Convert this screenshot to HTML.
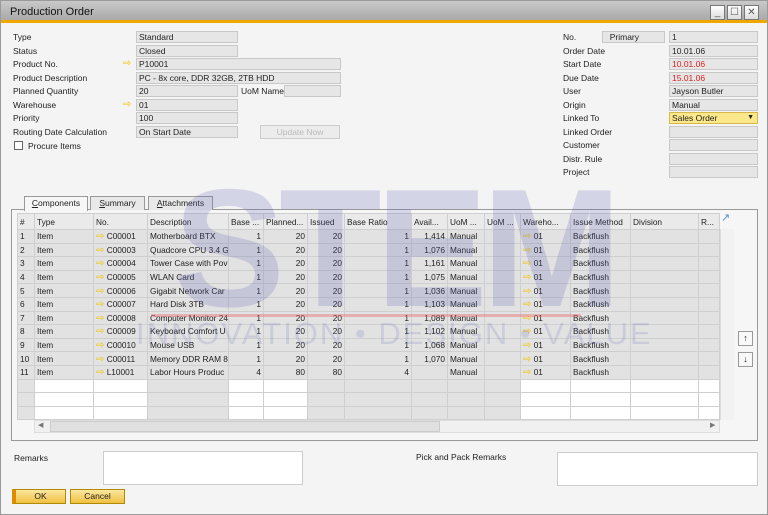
<!DOCTYPE html>
<html><head><meta charset="utf-8"><style>
*{box-sizing:border-box;margin:0;padding:0}
body{width:768px;height:515px;overflow:hidden;background:#fff;font-family:"Liberation Sans",sans-serif;font-size:8.5px;color:#222;position:relative}
.win{position:absolute;left:0;top:0;width:768px;height:515px;border:1px solid #9a9a9a;background:#f4f4f4}
.title{position:absolute;left:0;top:0;width:766px;height:22px;background:linear-gradient(#c9c9c9,#a9a9a9);border-bottom:3px solid #f0a800}
.title span{position:absolute;left:9px;top:5px;font-size:11px;color:#111}
.tb{position:absolute;top:4px;width:15px;height:15px;border:1px solid #777;background:linear-gradient(#fff,#ddd);font-size:10px;text-align:center;line-height:13px;color:#555}
.a{position:absolute;white-space:nowrap}
.f{position:absolute;height:12px;background:#e6e6e6;border:1px solid #c8c8c8;padding-left:2px;line-height:10px;white-space:nowrap;overflow:hidden}
.arr{color:#f2c200;font-size:10px;line-height:10px}
.tab{position:absolute;top:195px;height:14px;border:1px solid #999;border-bottom:none;background:#e9e9e9;text-align:center;line-height:12px}
.panel{position:absolute;left:10px;top:208px;width:747px;height:232px;border:1px solid #999;background:#f6f6f6}
table{position:absolute;left:16px;top:212px;border-collapse:collapse;table-layout:fixed;width:702px}
td,th{height:13.6px;line-height:12px;border:1px solid #cfcfcf;padding:0 2px;white-space:nowrap;overflow:hidden;font-weight:normal;text-align:left;font-size:8.3px}
th{height:16px;background:#eaeaea}
tr.r td{background:#e2e2e2}
tr.e td{background:#fff}
tr.e td.g{background:#e2e2e2}
.n{text-align:right}
.wm{position:absolute;left:172px;top:163px;font-size:168px;font-weight:bold;color:rgba(95,105,185,0.22);letter-spacing:-6px;line-height:1}
.wm2{position:absolute;left:135px;top:317px;font-size:31px;color:rgba(95,105,185,0.18);letter-spacing:2px;line-height:1;white-space:nowrap}
.btn{position:absolute;top:488px;height:15px;border:1px solid #b08a00;background:linear-gradient(#fbe7a0,#f0c040);text-align:center;line-height:13px}
</style></head><body><div class="win">
<div class="title"><span>Production Order</span>
<div class="tb" style="left:709px">_</div><div class="tb" style="left:726px">☐</div><div class="tb" style="left:743px">✕</div></div>

<div class="a" style="left:12px;top:31px">Type</div><div class="f" style="left:135px;top:30px;width:102px">Standard</div>
<div class="a" style="left:12px;top:45px">Status</div><div class="f" style="left:135px;top:44px;width:102px">Closed</div>
<div class="a" style="left:12px;top:58px">Product No.</div><span class="a arr" style="left:122px;top:58px">⇨</span><div class="f" style="left:135px;top:57px;width:205px">P10001</div>
<div class="a" style="left:12px;top:72px">Product Description</div><div class="f" style="left:135px;top:71px;width:205px">PC - 8x core, DDR 32GB, 2TB HDD</div>
<div class="a" style="left:12px;top:85px">Planned Quantity</div><div class="f" style="left:135px;top:84px;width:102px">20</div>
<div class="a" style="left:240px;top:85px">UoM Name</div><div class="f" style="left:283px;top:84px;width:57px"></div>
<div class="a" style="left:12px;top:99px">Warehouse</div><span class="a arr" style="left:122px;top:99px">⇨</span><div class="f" style="left:135px;top:98px;width:102px">01</div>
<div class="a" style="left:12px;top:112px">Priority</div><div class="f" style="left:135px;top:111px;width:102px">100</div>
<div class="a" style="left:12px;top:126px">Routing Date Calculation</div><div class="f" style="left:135px;top:125px;width:102px">On Start Date</div>
<div class="a" style="left:259px;top:124px;width:80px;height:14px;border:1px solid #ccc;background:#ececec;color:#bbb;text-align:center;line-height:12px">Update Now</div>
<div class="a" style="left:13px;top:140px;width:9px;height:9px;border:1px solid #666;background:#fff"></div><div class="a" style="left:27px;top:140px">Procure Items</div>

<div class="a" style="left:562px;top:31px">No.</div><div class="f" style="left:601px;top:30px;width:63px;padding-left:2px">&nbsp;&nbsp;Primary</div><div class="f" style="left:668px;top:30px;width:89px">1</div>
<div class="a" style="left:562px;top:45px">Order Date</div><div class="f" style="left:668px;top:44px;width:89px">10.01.06</div>
<div class="a" style="left:562px;top:58px">Start Date</div><div class="f" style="left:668px;top:57px;width:89px;color:#e02020">10.01.06</div>
<div class="a" style="left:562px;top:72px">Due Date</div><div class="f" style="left:668px;top:71px;width:89px;color:#e02020">15.01.06</div>
<div class="a" style="left:562px;top:85px">User</div><div class="f" style="left:668px;top:84px;width:89px">Jayson Butler</div>
<div class="a" style="left:562px;top:99px">Origin</div><div class="f" style="left:668px;top:98px;width:89px">Manual</div>
<div class="a" style="left:562px;top:112px">Linked To</div><div class="f" style="left:668px;top:111px;width:89px;background:#fbe88a;border-color:#d9b84a">Sales Order<span style="position:absolute;right:3px;top:0;font-size:7px">▼</span></div>
<div class="a" style="left:562px;top:126px">Linked Order</div><div class="f" style="left:668px;top:125px;width:89px"></div>
<div class="a" style="left:562px;top:139px">Customer</div><div class="f" style="left:668px;top:138px;width:89px"></div>
<div class="a" style="left:562px;top:153px">Distr. Rule</div><div class="f" style="left:668px;top:152px;width:89px"></div>
<div class="a" style="left:562px;top:166px">Project</div><div class="f" style="left:668px;top:165px;width:89px"></div>

<div class="panel"></div>
<div class="tab" style="left:23px;width:64px;background:#f6f6f6;height:15px"><u>C</u>omponents</div>
<div class="tab" style="left:89px;width:55px"><u>S</u>ummary</div>
<div class="tab" style="left:147px;width:65px"><u>A</u>ttachments</div>

<table>
<colgroup><col style="width:17px"><col style="width:59px"><col style="width:54px"><col style="width:81px"><col style="width:35px"><col style="width:44px"><col style="width:37px"><col style="width:67px"><col style="width:36px"><col style="width:37px"><col style="width:36px"><col style="width:50px"><col style="width:60px"><col style="width:68px"><col style="width:21px"></colgroup>
<tr><th>#</th><th>Type</th><th>No.</th><th>Description</th><th>Base ...</th><th>Planned...</th><th>Issued</th><th>Base Ratio</th><th>Avail...</th><th>UoM ...</th><th>UoM ...</th><th>Wareho...</th><th>Issue Method</th><th>Division</th><th>R...</th></tr>
<tr class="r"><td>1</td><td>Item</td><td><span class="arr">⇨</span> C00001</td><td>Motherboard BTX</td><td class="n">1</td><td class="n">20</td><td class="n">20</td><td class="n">1</td><td class="n">1,414</td><td>Manual</td><td></td><td><span class="arr">⇨</span> 01</td><td>Backflush</td><td></td><td></td></tr>
<tr class="r"><td>2</td><td>Item</td><td><span class="arr">⇨</span> C00003</td><td>Quadcore CPU 3.4 G</td><td class="n">1</td><td class="n">20</td><td class="n">20</td><td class="n">1</td><td class="n">1,076</td><td>Manual</td><td></td><td><span class="arr">⇨</span> 01</td><td>Backflush</td><td></td><td></td></tr>
<tr class="r"><td>3</td><td>Item</td><td><span class="arr">⇨</span> C00004</td><td>Tower Case with Pov</td><td class="n">1</td><td class="n">20</td><td class="n">20</td><td class="n">1</td><td class="n">1,161</td><td>Manual</td><td></td><td><span class="arr">⇨</span> 01</td><td>Backflush</td><td></td><td></td></tr>
<tr class="r"><td>4</td><td>Item</td><td><span class="arr">⇨</span> C00005</td><td>WLAN Card</td><td class="n">1</td><td class="n">20</td><td class="n">20</td><td class="n">1</td><td class="n">1,075</td><td>Manual</td><td></td><td><span class="arr">⇨</span> 01</td><td>Backflush</td><td></td><td></td></tr>
<tr class="r"><td>5</td><td>Item</td><td><span class="arr">⇨</span> C00006</td><td>Gigabit Network Car</td><td class="n">1</td><td class="n">20</td><td class="n">20</td><td class="n">1</td><td class="n">1,036</td><td>Manual</td><td></td><td><span class="arr">⇨</span> 01</td><td>Backflush</td><td></td><td></td></tr>
<tr class="r"><td>6</td><td>Item</td><td><span class="arr">⇨</span> C00007</td><td>Hard Disk 3TB</td><td class="n">1</td><td class="n">20</td><td class="n">20</td><td class="n">1</td><td class="n">1,103</td><td>Manual</td><td></td><td><span class="arr">⇨</span> 01</td><td>Backflush</td><td></td><td></td></tr>
<tr class="r"><td>7</td><td>Item</td><td><span class="arr">⇨</span> C00008</td><td>Computer Monitor 24</td><td class="n">1</td><td class="n">20</td><td class="n">20</td><td class="n">1</td><td class="n">1,089</td><td>Manual</td><td></td><td><span class="arr">⇨</span> 01</td><td>Backflush</td><td></td><td></td></tr>
<tr class="r"><td>8</td><td>Item</td><td><span class="arr">⇨</span> C00009</td><td>Keyboard Comfort U</td><td class="n">1</td><td class="n">20</td><td class="n">20</td><td class="n">1</td><td class="n">1,102</td><td>Manual</td><td></td><td><span class="arr">⇨</span> 01</td><td>Backflush</td><td></td><td></td></tr>
<tr class="r"><td>9</td><td>Item</td><td><span class="arr">⇨</span> C00010</td><td>Mouse USB</td><td class="n">1</td><td class="n">20</td><td class="n">20</td><td class="n">1</td><td class="n">1,068</td><td>Manual</td><td></td><td><span class="arr">⇨</span> 01</td><td>Backflush</td><td></td><td></td></tr>
<tr class="r"><td>10</td><td>Item</td><td><span class="arr">⇨</span> C00011</td><td>Memory DDR RAM 8</td><td class="n">1</td><td class="n">20</td><td class="n">20</td><td class="n">1</td><td class="n">1,070</td><td>Manual</td><td></td><td><span class="arr">⇨</span> 01</td><td>Backflush</td><td></td><td></td></tr>
<tr class="r"><td>11</td><td>Item</td><td><span class="arr">⇨</span> L10001</td><td>Labor Hours Produc</td><td class="n">4</td><td class="n">80</td><td class="n">80</td><td class="n">4</td><td class="n"></td><td>Manual</td><td></td><td><span class="arr">⇨</span> 01</td><td>Backflush</td><td></td><td></td></tr>
<tr class="e"><td class="g"></td><td></td><td></td><td class="g"></td><td></td><td></td><td class="g"></td><td class="g"></td><td class="g"></td><td class="g"></td><td class="g"></td><td></td><td></td><td></td><td></td></tr>
<tr class="e"><td class="g"></td><td></td><td></td><td class="g"></td><td></td><td></td><td class="g"></td><td class="g"></td><td class="g"></td><td class="g"></td><td class="g"></td><td></td><td></td><td></td><td></td></tr>
<tr class="e"><td class="g"></td><td></td><td></td><td class="g"></td><td></td><td></td><td class="g"></td><td class="g"></td><td class="g"></td><td class="g"></td><td class="g"></td><td></td><td></td><td></td><td></td></tr>
</table>
<div class="a" style="left:719px;top:228px;width:14px;height:191px;background:#f2f2f2;border-left:1px solid #ddd"></div>
<div class="a" style="left:720px;top:210px;color:#5a8ed0;font-size:11px">↗</div>
<div class="a" style="left:33px;top:419px;width:686px;height:13px;background:#f0f0f0;border:1px solid #ddd"></div>
<div class="a" style="left:49px;top:420px;width:390px;height:11px;background:#e0e0e0;border:1px solid #ccc"></div>
<div class="a" style="left:37px;top:420px;font-size:7px;color:#777">◀</div>
<div class="a" style="left:709px;top:420px;font-size:7px;color:#777">▶</div>
<div class="a" style="left:737px;top:330px;width:15px;height:15px;border:1px solid #999;background:#f8f8f8;text-align:center;font-size:9px;line-height:13px">↑</div>
<div class="a" style="left:737px;top:351px;width:15px;height:15px;border:1px solid #999;background:#f8f8f8;text-align:center;font-size:9px;line-height:13px">↓</div>

<div class="wm">STEM</div>
<div class="wm2">INNOVATION • DESIGN • VALUE</div>
<div class="a" style="left:150px;top:313px;width:430px;height:3px;background:rgba(235,100,100,0.4)"></div>

<div class="a" style="left:13px;top:452px">Remarks</div>
<div class="a" style="left:102px;top:450px;width:200px;height:34px;background:#fff;border:1px solid #ccc"></div>
<div class="a" style="left:415px;top:451px">Pick and Pack Remarks</div>
<div class="a" style="left:556px;top:451px;width:201px;height:34px;background:#fff;border:1px solid #ccc"></div>
<div class="btn" style="left:11px;width:54px;border-left:4px solid #e08a00">OK</div>
<div class="btn" style="left:69px;width:55px">Cancel</div>
</div></body></html>
